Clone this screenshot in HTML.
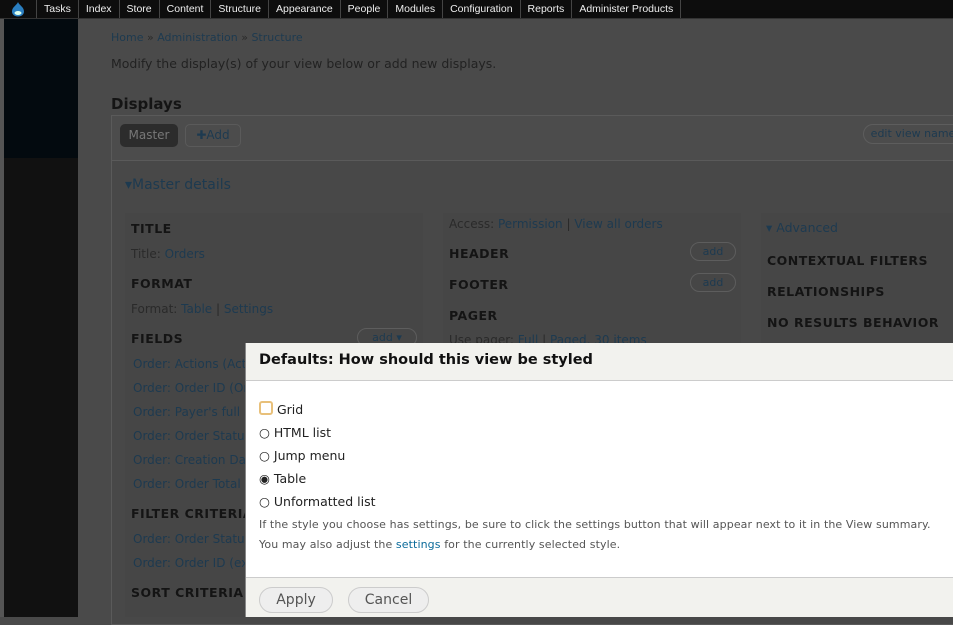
<!DOCTYPE html>
<html><head><style>
*{margin:0;padding:0;box-sizing:border-box}
html,body{background:#4a4a4a}
body{width:953px;height:617px;overflow:hidden;font-family:"DejaVu Sans","Liberation Sans",sans-serif;position:relative;font-size:12px;color:#2a2a2a}
.a{position:absolute;white-space:nowrap}
#tb{left:0;top:0;width:953px;height:19px;background:#0d0d0d;border-bottom:1px solid #333;display:flex;align-items:center}
#tb span{display:block;color:#eee;font-family:"Liberation Sans",sans-serif;font-size:10.5px;line-height:18px;height:18px;padding:0 7px;border-right:1px solid #444}
.lk{color:#1d3a50}
.h{font-weight:bold;color:#141414;font-size:12.5px;letter-spacing:.5px}
.pill{border:1px solid #5d5d5d;border-radius:10px;color:#1d3a50;font-size:11px;text-align:center}
</style></head><body>
<div class="a" style="left:0;top:19px;width:4px;height:598px;background:#555"></div>
<div class="a" style="left:4px;top:19px;width:74px;height:139px;background:#030a0f"></div>
<div class="a" style="left:4px;top:158px;width:74px;height:459px;background:#111"></div>
<div class="a" id="tb"><span style="width:37px;padding:0;text-align:center"><svg width="14" height="16" viewBox="0 0 14 16" style="margin-top:1px"><path d="M7 1C8 4 13 6 13 10.5 13 13.5 10.5 15.5 7 15.5 3.5 15.5 1 13.5 1 10.5 1 6 6 4 7 1Z" fill="#2a7ec0"/><ellipse cx="7" cy="12" rx="3.5" ry="2" fill="#dfe"/></svg></span><span>Tasks</span><span>Index</span><span>Store</span><span>Content</span><span>Structure</span><span>Appearance</span><span>People</span><span>Modules</span><span>Configuration</span><span>Reports</span><span>Administer Products</span></div>
<div class="a" style="left:111px;top:31px;font-size:11px" ><span class="lk">Home</span> » <span class="lk">Administration</span> » <span class="lk">Structure</span></div>
<div class="a" style="left:111px;top:56px;font-size:12.5px;color:#222">Modify the display(s) of your view below or add new displays.</div>
<div class="a" style="left:111px;top:95px;font-size:15px;font-weight:bold;color:#141414">Displays</div>
<div class="a" style="left:111px;top:115px;width:850px;height:510px;border:1px solid #5a5a5a;background:#484848"></div>
<div class="a" style="left:111px;top:115px;width:850px;height:46px;border:1px solid #5a5a5a;background:#4c4c4c"></div>
<div class="a" style="left:120px;top:124px;width:58px;height:23px;background:#2c2c2c;border-radius:5px;color:#777;font-size:12px;line-height:23px;text-align:center">Master</div>
<div class="a" style="left:185px;top:124px;width:56px;height:23px;border:1px solid #5a5a5a;border-radius:5px;color:#1d3a50;font-size:12px;line-height:21px;text-align:center">✚Add</div>
<div class="a pill" style="left:863px;top:124px;width:100px;height:20px;line-height:18px">edit view name</div>
<div class="a" style="left:125px;top:177px;font-size:14px;color:#1d3a50">▾Master details</div>
<div class="a" style="left:125px;top:213px;width:298px;height:404px;background:#464646"></div>
<div class="a" style="left:443px;top:213px;width:298px;height:130px;background:#464646"></div>
<div class="a" style="left:761px;top:213px;width:200px;height:130px;background:#464646"></div>
<div class="a h" style="left:131px;top:221px">TITLE</div>
<div class="a" style="left:131px;top:247px">Title: <span class="lk">Orders</span></div>
<div class="a h" style="left:131px;top:276px">FORMAT</div>
<div class="a" style="left:131px;top:302px">Format: <span class="lk">Table</span> | <span class="lk">Settings</span></div>
<div class="a h" style="left:131px;top:331px">FIELDS</div>
<div class="a pill" style="left:357px;top:328px;width:60px;height:19px;line-height:17px">add ▾</div>
<div class="a lk" style="left:133px;top:357px">Order: Actions (Acti</div>
<div class="a lk" style="left:133px;top:381px">Order: Order ID (Or</div>
<div class="a lk" style="left:133px;top:405px">Order: Payer's full n</div>
<div class="a lk" style="left:133px;top:429px">Order: Order Status</div>
<div class="a lk" style="left:133px;top:453px">Order: Creation Dat</div>
<div class="a lk" style="left:133px;top:477px">Order: Order Total</div>
<div class="a h" style="left:131px;top:506px">FILTER CRITERIA</div>
<div class="a lk" style="left:133px;top:532px">Order: Order Status</div>
<div class="a lk" style="left:133px;top:556px">Order: Order ID (ex</div>
<div class="a h" style="left:131px;top:585px">SORT CRITERIA</div>
<div class="a" style="left:449px;top:217px">Access: <span class="lk">Permission</span> | <span class="lk">View all orders</span></div>
<div class="a h" style="left:449px;top:246px">HEADER</div>
<div class="a pill" style="left:690px;top:242px;width:46px;height:19px;line-height:17px">add</div>
<div class="a h" style="left:449px;top:277px">FOOTER</div>
<div class="a pill" style="left:690px;top:273px;width:46px;height:19px;line-height:17px">add</div>
<div class="a h" style="left:449px;top:308px">PAGER</div>
<div class="a" style="left:449px;top:333px">Use pager: <span class="lk">Full</span> | <span class="lk">Paged, 30 items</span></div>
<div class="a" style="left:766px;top:220px;color:#1d3a50;font-size:12.5px">▾ Advanced</div>
<div class="a h" style="left:767px;top:253px">CONTEXTUAL FILTERS</div>
<div class="a h" style="left:767px;top:284px">RELATIONSHIPS</div>
<div class="a h" style="left:767px;top:315px">NO RESULTS BEHAVIOR</div>
<div class="a" style="left:245px;top:343px;width:708px;height:274px;background:#fff;border-left:1px solid #888">
 <div style="height:38px;background:#f2f2ee;border-bottom:1px solid #ccc;font-weight:bold;font-size:14.5px;color:#111;padding:9px 13px">Defaults: How should this view be styled</div>
 <div style="position:absolute;top:234px;left:0;width:708px;height:40px;background:#f2f2ee;border-top:1px solid #ccc"></div>
</div>
<div class="a" style="left:259px;top:398px;font-size:12.5px;color:#222;line-height:23px">
<div><span style="display:inline-block;width:14px;height:14px;border:2px solid #e8c07a;border-radius:3px;vertical-align:-1px"></span> Grid</div>
<div>○ HTML list</div><div>○ Jump menu</div><div>◉ Table</div><div>○ Unformatted list</div></div>
<div class="a" style="left:259px;top:515px;font-size:11px;color:#555;line-height:20px;letter-spacing:.1px">If the style you choose has settings, be sure to click the settings button that will appear next to it in the View summary.<br>You may also adjust the <span style="color:#0a6a9a">settings</span> for the currently selected style.</div>
<div class="a" style="left:259px;top:587px;width:74px;height:26px;border:1px solid #ccc;border-radius:13px;background:#eee;color:#555;font-size:14px;text-align:center;line-height:24px">Apply</div>
<div class="a" style="left:348px;top:587px;width:81px;height:26px;border:1px solid #ccc;border-radius:13px;background:#eee;color:#555;font-size:14px;text-align:center;line-height:24px">Cancel</div>
</body></html>
